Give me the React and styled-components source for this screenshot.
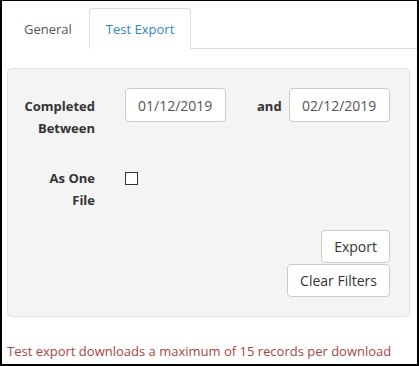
import React from "react";
import styled, { createGlobalStyle } from "styled-components";

const Global = createGlobalStyle`
  html, body { margin: 0; padding: 0; background: #fff; }
  body { font-family: "Open Sans", "Liberation Sans", sans-serif; color: #333; }
  * { box-sizing: border-box; }
`;

const Frame = styled.div`
  width: 419px;
  height: 366px;
  border-style: solid;
  border-color: #000;
  border-width: 1px 2px 2px 2px;
  padding: 7px 0 0 5px;
  background: #fff;
`;

const TabBar = styled.div`
  display: flex;
  height: 41px;
  border-bottom: 1px solid #ddd;
`;

const Tab = styled.div`
  height: 41px;
  margin-bottom: -1px;
  padding: 0 16px;
  display: flex;
  align-items: center;
  font-size: 13px;
  color: ${(p) => (p.$active ? "#2d87c6" : "#555")};
  background: #fff;
  border: 1px solid ${(p) => (p.$active ? "#ddd" : "transparent")};
  border-bottom-color: ${(p) => (p.$active ? "#fff" : "transparent")};
  border-radius: 4px 4px 0 0;
`;

const Panel = styled.div`
  margin: 19px 7px 0 0;
  background: #f4f4f4;
  border: 1px solid #e3e3e3;
  border-radius: 4px;
  padding: 19px 19px 19px 0;
  display: flex;
  flex-direction: column;
`;

const Row = styled.div`
  display: flex;
  align-items: flex-start;
  margin-top: ${(p) => p.$mt || 0}px;
`;

const Label = styled.div`
  width: ${(p) => p.$w || 87}px;
  flex: none;
  padding: 7px 0 0 ${(p) => (p.$w ? 0 : 16.5)}px;
  text-align: right;
  font-size: 13px;
  font-weight: 700;
  line-height: 22px;
  color: #333;
  margin-left: ${(p) => p.$ml || 0}px;
`;

const DateInput = styled.div`
  width: 101px;
  height: 34px;
  margin-left: ${(p) => p.$ml || 0}px;
  padding: 0 12px;
  display: flex;
  align-items: center;
  background: #fff;
  border: 1px solid #ccc;
  border-radius: 4px;
  font-size: 14px;
  color: #555;
`;

const Check = styled.input`
  appearance: none;
  margin: 12px 0 0 30px;
  width: 13px;
  height: 13px;
  border: 1px solid #333;
  background: #fff;
  border-radius: 0;
`;

const Buttons = styled.div`
  margin-top: 19px;
  display: flex;
  flex-direction: column;
  align-items: flex-end;
  gap: 1px;
`;

const Button = styled.button`
  height: 33px;
  padding: 0 12px;
  background: #fff;
  border: 1px solid #ccc;
  border-radius: 4px;
  font-family: "Open Sans", "Liberation Sans", sans-serif;
  font-size: 14px;
  color: #333;
`;

const Note = styled.div`
  margin-top: 25px;
  font-size: 13px;
  line-height: 18px;
  color: #a94442;
`;

export default function App() {
  return (
    <>
      <Global />
      <Frame>
        <TabBar>
          <Tab>General</Tab>
          <Tab $active>Test Export</Tab>
        </TabBar>
        <Panel>
          <Row>
            <Label>Completed Between</Label>
            <DateInput $ml={30}>01/12/2019</DateInput>
            <Label $w={22} $ml={31}>and</Label>
            <DateInput $ml={10}>02/12/2019</DateInput>
          </Row>
          <Row $mt={21}>
            <Label>As One File</Label>
            <Check type="checkbox" />
          </Row>
          <Buttons>
            <Button>Export</Button>
            <Button>Clear Filters</Button>
          </Buttons>
        </Panel>
        <Note>Test export downloads a maximum of 15 records per download</Note>
      </Frame>
    </>
  );
}
